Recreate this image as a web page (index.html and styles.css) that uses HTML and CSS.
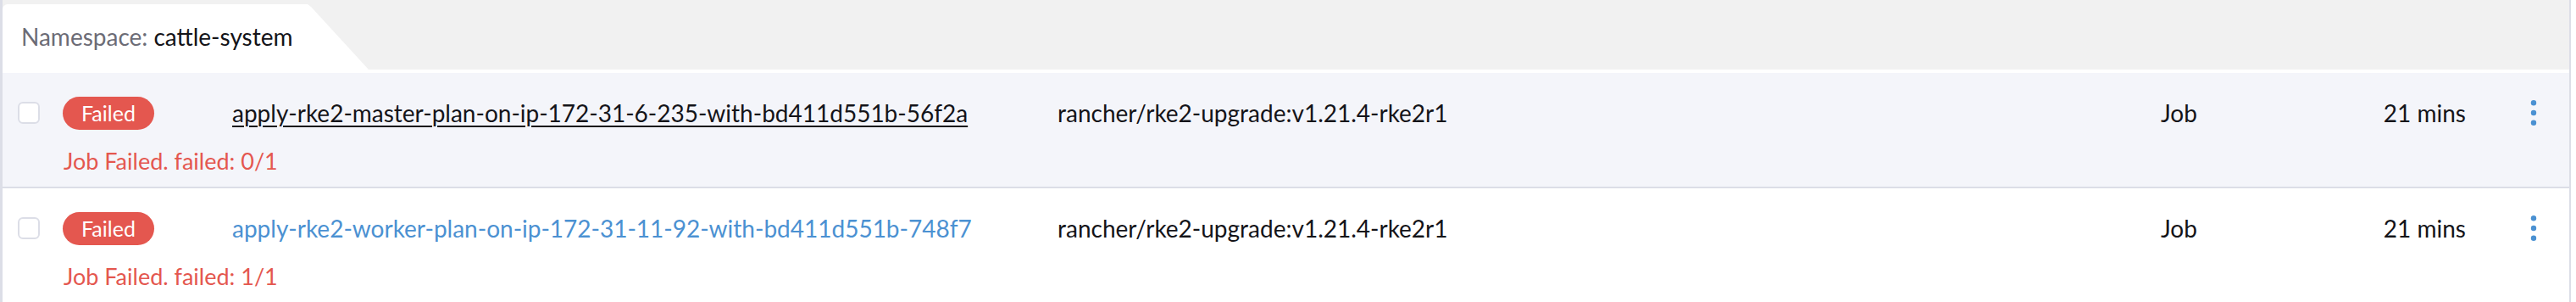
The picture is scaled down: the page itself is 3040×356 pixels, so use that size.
FILE: index.html
```html
<!DOCTYPE html>
<html lang="en">

<head>
    <meta charset="UTF-8">
    <meta name="viewport" content="width=device-width, initial-scale=1.0">
    <title>Jobs - cattle-system</title>
    <link rel="stylesheet" href="styles.css">
</head>

<body>
    <div class="table">
        <div class="group-row">
            <div class="group-tab">
                <span class="ns-label">Namespace:</span>&nbsp;<span class="ns-value">cattle-system</span>
            </div>
        </div>

        <div class="row hover">
            <div class="main">
                <div class="cell check"><span class="checkbox"></span></div>
                <div class="cell state"><span class="badge">Failed</span></div>
                <div class="cell name"><a href="#" class="link">apply-rke2-master-plan-on-ip-172-31-6-235-with-bd411d551b-56f2a</a></div>
                <div class="cell image">rancher/rke2-upgrade:v1.21.4-rke2r1</div>
                <div class="cell type">Job</div>
                <div class="cell age">21 mins</div>
                <div class="cell actions">
                    <svg width="8" height="32" viewBox="0 0 8 32">
                        <circle cx="4" cy="4.3" r="3.2" />
                        <circle cx="4" cy="16" r="3.2" />
                        <circle cx="4" cy="27.7" r="3.2" />
                    </svg>
                </div>
            </div>
            <div class="sub">Job Failed. failed: 0/1</div>
        </div>

        <div class="row">
            <div class="main">
                <div class="cell check"><span class="checkbox"></span></div>
                <div class="cell state"><span class="badge">Failed</span></div>
                <div class="cell name"><a href="#" class="link">apply-rke2-worker-plan-on-ip-172-31-11-92-with-bd411d551b-748f7</a></div>
                <div class="cell image">rancher/rke2-upgrade:v1.21.4-rke2r1</div>
                <div class="cell type">Job</div>
                <div class="cell age">21 mins</div>
                <div class="cell actions">
                    <svg width="8" height="32" viewBox="0 0 8 32">
                        <circle cx="4" cy="4.3" r="3.2" />
                        <circle cx="4" cy="16" r="3.2" />
                        <circle cx="4" cy="27.7" r="3.2" />
                    </svg>
                </div>
            </div>
            <div class="sub">Job Failed. failed: 1/1</div>
        </div>
    </div>
</body>

</html>
```

FILE: styles.css
```css
body {
    margin: 0;
    background-color: #fff;
    color: #141419;
    font-family: Lato, "Noto Sans", sans-serif;
    font-size: 28px;
}

.table {
    width: 3034px;
    box-sizing: border-box;
    border-left: 3px solid #dcdee7;
    border-right: 2px solid #dcdee7;
}

.group-row {
    background-color: #f1f1f1;
    height: 77px;
    padding-top: 5px;
    border-bottom: 4px solid #fff;
}

.group-tab {
    width: 432px;
    height: 77px;
    background-color: #fff;
    border-top-left-radius: 6px;
    clip-path: polygon(0 0, 360px 0, 364px 3px, 100% 100%, 0 100%);
    display: flex;
    align-items: center;
    padding-left: 22px;
    padding-bottom: 2px;
    box-sizing: border-box;
}

.ns-label {
    color: #6c6c76;
}

.row {
    background-color: #fff;
    border-bottom: 2px solid #dcdee7;
    height: 136px;
    box-sizing: border-box;
}

.row.hover {
    background-color: #f4f5fa;
}

.main {
    display: flex;
    align-items: center;
    height: 38px;
    padding-top: 28px;
}

.cell {
    display: flex;
    align-items: center;
}

.check {
    width: 71px;
    padding-left: 18px;
    box-sizing: border-box;
}

.checkbox {
    width: 26px;
    height: 26px;
    box-sizing: border-box;
    border: 2px solid #dcdee7;
    border-radius: 6px;
    background-color: #fff;
}

.state {
    width: 200px;
}

.badge {
    background-color: #e4574f;
    color: #fff;
    font-size: 25px;
    line-height: 39px;
    padding: 0 22px;
    border-radius: 20px;
}

.name {
    width: 974px;
}

.link {
    color: #4b91d2;
    text-decoration: none;
}

.hover .link {
    color: #141419;
    text-decoration: underline;
    text-decoration-thickness: 2px;
    text-underline-offset: 4px;
}

.image {
    flex: 1;
}

.type {
    width: 160px;
}

.age {
    width: 200px;
    justify-content: flex-end;
}

.actions {
    width: 122px;
    padding-left: 76px;
    box-sizing: border-box;
}

.actions svg {
    fill: #4b91d2;
}

.sub {
    color: #e4574f;
    font-size: 27px;
    line-height: 36px;
    padding-left: 72px;
    margin-top: 20px;
}
```
